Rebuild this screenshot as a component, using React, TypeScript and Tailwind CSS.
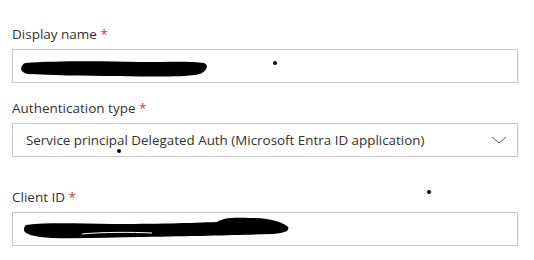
const font = { fontFamily: '"Open Sans", "Noto Sans", sans-serif' };

function Label({ text }: { text: string }) {
  return (
    <div className="h-5 text-[13.5px] leading-5 text-[#323130] mb-[5px]">
      {text} <span className="text-[#d13438]">*</span>
    </div>
  );
}

function Dot({ className }: { className: string }) {
  return <span className={`absolute h-[4px] w-[4px] rounded-full bg-black ${className}`} />;
}

export default function App() {
  return (
    <div className="relative h-[260px] w-[534px] bg-white" style={font}>
      <div className="flex w-[506px] flex-col pl-0 pt-[24px] ml-[12px]">
        <Label text="Display name" />
        <div className="relative h-[34px] border border-[#c8c8c8] bg-white">
          <svg className="absolute left-[7px] top-[8px]" width="190" height="22" viewBox="0 0 190 22">
            <path
              d="M6 5 C30 3 80 3 120 4 C150 4 172 3 184 5 C189 7 187 12 182 15 C176 19 140 19 100 18 C60 18 30 17 8 16 C1 15 0 10 2 8 C3 6 4 5 6 5 Z"
              fill="black"
            />
          </svg>
        </div>

        <div className="mt-[15px]">
          <Label text="Authentication type" />
        </div>
        <div className="relative flex h-[34px] items-center border border-[#c8c8c8] bg-white pl-[13px] pr-[9px]">
          <span className="flex-1 text-[13.4px] text-[#323130]">
            Service principal Delegated Auth (Microsoft Entra ID application)
          </span>
          <svg width="16" height="10" viewBox="0 0 16 10" className="mr-[1px]">
            <path d="M1 2 L8 8 L15 2" fill="none" stroke="#605e5c" strokeWidth="1" />
          </svg>
        </div>

        <div className="mt-[30px]">
          <Label text="Client ID" />
        </div>
        <div className="relative h-[34px] border border-[#c8c8c8] bg-white">
          <svg className="absolute left-[9px] top-[3px]" width="270" height="26" viewBox="0 0 270 26">
            <path
              d="M4 9 C30 6 60 8 90 8 C130 8 170 7 195 6 C200 2 210 1 230 2 C250 2 262 7 266 11 C268 15 262 17 250 18 C220 19 180 20 120 21 C90 21 60 23 30 22 C12 21 2 18 2 14 C2 11 3 10 4 9 Z"
              fill="black"
            />
            <path d="M60 18 C80 16 110 16 130 17" fill="none" stroke="white" strokeWidth="1" />
          </svg>
        </div>
      </div>
      <Dot className="left-[273px] top-[61px]" />
      <Dot className="left-[117px] top-[149px]" />
      <Dot className="left-[427px] top-[190px]" />
    </div>
  );
}
